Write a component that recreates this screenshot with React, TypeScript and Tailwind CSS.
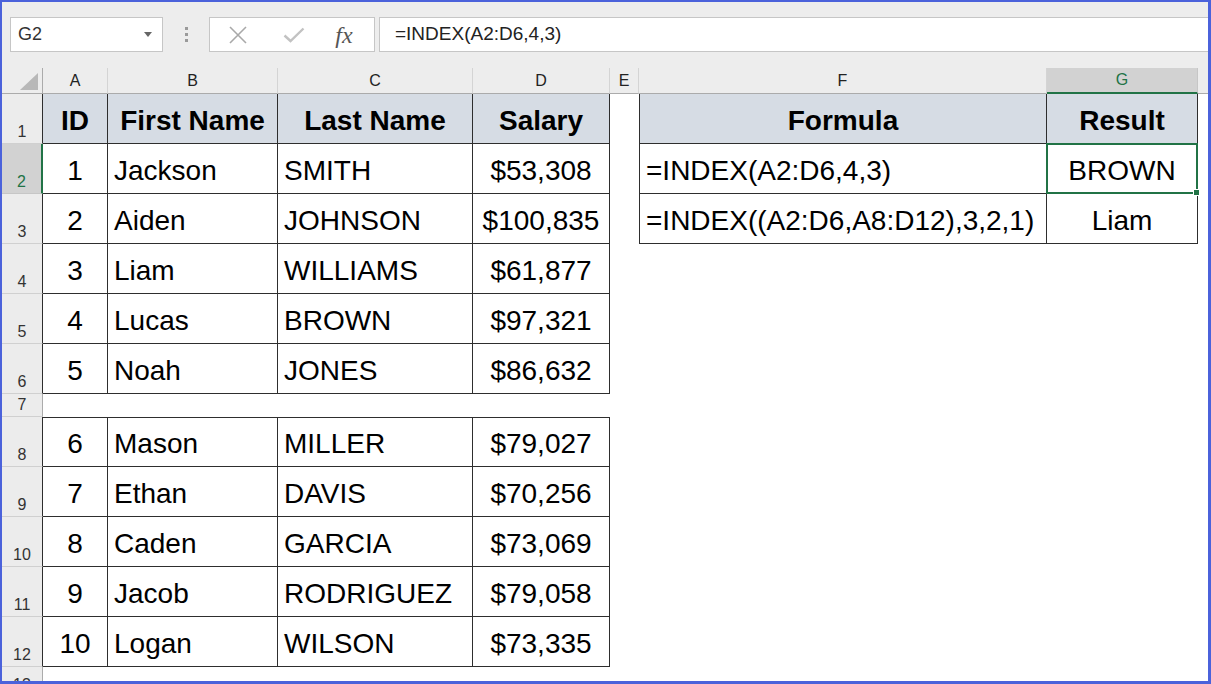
import React from 'react';

// column template shared by the header row and every sheet row
const COLS = 'grid grid-cols-[41px_65px_170px_195px_137px_29px_408px_151px_1fr]';

const table1 = [
  ['1', 'Jackson', 'SMITH', '$53,308'],
  ['2', 'Aiden', 'JOHNSON', '$100,835'],
  ['3', 'Liam', 'WILLIAMS', '$61,877'],
  ['4', 'Lucas', 'BROWN', '$97,321'],
  ['5', 'Noah', 'JONES', '$86,632'],
];

const table2 = [
  ['6', 'Mason', 'MILLER', '$79,027'],
  ['7', 'Ethan', 'DAVIS', '$70,256'],
  ['8', 'Caden', 'GARCIA', '$73,069'],
  ['9', 'Jacob', 'RODRIGUEZ', '$79,058'],
  ['10', 'Logan', 'WILSON', '$73,335'],
];

const formulas: Record<number, [string, string]> = {
  0: ['=INDEX(A2:D6,4,3)', 'BROWN'],
  1: ['=INDEX((A2:D6,A8:D12),3,2,1)', 'Liam'],
};

type CellProps = {
  text?: string;
  center?: boolean;
  head?: boolean;
  left?: boolean;
  top?: boolean;
  selected?: boolean;
};

// a bordered cell of one of the data tables
function Cell({ text, center, head, left, top, selected }: CellProps) {
  return (
    <div
      className={`relative flex items-end pb-[6px] leading-[32px] text-[28px] text-black whitespace-nowrap border-r border-b border-[#2e2e2e] ${
        center ? 'justify-center' : 'justify-start pl-[6px]'
      } ${head ? 'font-bold bg-[#d6dce4]' : 'bg-white'} ${left ? 'border-l' : ''} ${top ? 'border-t' : ''}`}
    >
      {text}
      {selected && (
        <div className="absolute inset-[-1px] z-10 border-2 border-[#217346]">
          <div className="absolute right-[-4px] bottom-[-4px] w-[7px] h-[7px] bg-[#217346] border border-white" />
        </div>
      )}
    </div>
  );
}

function Blank() {
  return <div className="bg-white" />;
}

function RowHead({ n, dark, active }: { n: number; dark?: boolean; active?: boolean }) {
  if (active) {
    return (
      <div className="flex items-end justify-center pb-[1px] leading-[20px] text-[16px] text-[#217346] bg-[#d2d2d2] border-b border-[#c6c6c6] border-r-2 border-r-[#217346]">
        {n}
      </div>
    );
  }
  return (
    <div
      className={`flex items-end justify-center pb-[1px] leading-[20px] text-[16px] text-[#333] bg-[#ececec] border-b border-[#d0d0d0] border-r ${
        dark ? 'border-r-[#2e2e2e]' : 'border-r-[#ababab]'
      }`}
    >
      {n}
    </div>
  );
}

function ColHead({ label, active }: { label: string; active?: boolean }) {
  if (active) {
    return (
      <div className="flex items-center justify-center text-[16px] text-[#217346] bg-[#d2d2d2] border-r border-[#c6c6c6] border-b-2 border-b-[#217346]">
        {label}
      </div>
    );
  }
  return (
    <div className="flex items-center justify-center text-[16px] text-[#222] bg-[#ededed] border-r border-[#d4d4d4] border-b border-b-[#ababab]">
      {label}
    </div>
  );
}

function TopBar() {
  return (
    <div className="h-[66px] bg-[#ededed] flex items-start pt-[15px] pl-[8px]">
      {/* name box */}
      <div className="w-[153px] h-[35px] bg-white border border-[#c6c6c6] flex items-center justify-between pl-[7px] pr-[10px] text-[18px] text-[#333]">
        <span>G2</span>
        <span className="w-0 h-0 border-l-[4px] border-r-[4px] border-t-[5px] border-l-transparent border-r-transparent border-t-[#666]" />
      </div>
      <div className="w-[46px] h-[35px] flex flex-col items-center justify-center gap-[3px]">
        <span className="w-[3px] h-[3px] bg-[#9a9a9a]" />
        <span className="w-[3px] h-[3px] bg-[#9a9a9a]" />
        <span className="w-[3px] h-[3px] bg-[#9a9a9a]" />
      </div>
      {/* cancel / enter / insert function */}
      <div className="w-[166px] h-[35px] bg-white border border-[#c6c6c6] flex items-center">
        <div className="w-[56px] flex justify-center">
          <svg width="20" height="20" viewBox="0 0 20 20">
            <path d="M2 2L18 18M18 2L2 18" stroke="#a9a9a9" strokeWidth="1.6" fill="none" />
          </svg>
        </div>
        <div className="w-[56px] flex justify-center">
          <svg width="22" height="16" viewBox="0 0 22 16">
            <path d="M1.5 8.5L7.5 14L20.5 1.5" stroke="#c2c2c2" strokeWidth="2.4" fill="none" />
          </svg>
        </div>
        <div className="w-[44px] flex justify-center font-['Liberation_Serif',serif] italic text-[24px] text-[#555] leading-none">
          fx
        </div>
      </div>
      <div className="flex-1 ml-[4px] h-[35px] bg-white border-l border-t border-b border-[#c6c6c6] flex items-center pl-[15px] text-[19px] text-[#222]">
        =INDEX(A2:D6,4,3)
      </div>
    </div>
  );
}

export default function App() {
  return (
    <div className="w-[1211px] h-[684px] overflow-hidden bg-white border-t-2 border-l-2 border-r-[3px] border-b-[3px] border-[#4b62db] font-['Liberation_Sans',Arial,sans-serif]">
      <TopBar />

      {/* column headers */}
      <div className={`${COLS} h-[26px]`}>
        <div className="relative bg-[#ededed] border-r border-[#ababab] border-b border-b-[#ababab]">
          <svg className="absolute right-[4px] bottom-[3px]" width="18" height="17" viewBox="0 0 18 17">
            <polygon points="18,0 18,17 0,17" fill="#b8b8b8" />
          </svg>
        </div>
        {['A', 'B', 'C', 'D', 'E', 'F'].map((c) => (
          <ColHead key={c} label={c} />
        ))}
        <ColHead label="G" active />
        <div className="bg-[#ededed] border-b border-[#ababab]" />
      </div>

      {/* row 1: table headers */}
      <div className={`${COLS} h-[50px]`}>
        <RowHead n={1} dark />
        <Cell text="ID" center head />
        <Cell text="First Name" center head />
        <Cell text="Last Name" center head />
        <Cell text="Salary" center head />
        <Blank />
        <Cell text="Formula" center head left />
        <Cell text="Result" center head />
        <Blank />
      </div>

      {/* rows 2-6 */}
      {table1.map((r, i) => (
        <div key={r[0]} className={`${COLS} h-[50px]`}>
          <RowHead n={i + 2} dark active={i === 0} />
          <Cell text={r[0]} center />
          <Cell text={r[1]} />
          <Cell text={r[2]} />
          <Cell text={r[3]} center />
          <Blank />
          {formulas[i] ? (
            <>
              <Cell text={formulas[i][0]} left />
              <Cell text={formulas[i][1]} center selected={i === 0} />
            </>
          ) : (
            <>
              <Blank />
              <Blank />
            </>
          )}
          <Blank />
        </div>
      ))}

      {/* row 7: gap */}
      <div className={`${COLS} h-[23px]`}>
        <RowHead n={7} />
      </div>

      {/* rows 8-12 */}
      {table2.map((r, i) => (
        <div key={r[0]} className={`${COLS} h-[50px]`}>
          <RowHead n={i + 8} dark />
          <Cell text={r[0]} center top={i === 0} />
          <Cell text={r[1]} top={i === 0} />
          <Cell text={r[2]} top={i === 0} />
          <Cell text={r[3]} center top={i === 0} />
        </div>
      ))}

      {/* row 13, cut off */}
      <div className={`${COLS} h-[30px]`}>
        <RowHead n={13} />
      </div>
    </div>
  );
}
